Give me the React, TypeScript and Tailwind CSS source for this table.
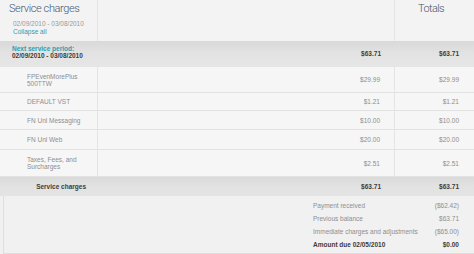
import React from "react";

const rows: { label: string[]; amt: string; h: string }[] = [
  { label: ["FPEvenMorePlus", "500TTW"], amt: "$29.99", h: "h-[26px]" },
  { label: ["DEFAULT VST"], amt: "$1.21", h: "h-[18px]" },
  { label: ["FN Unl Messaging"], amt: "$10.00", h: "h-[19px]" },
  { label: ["FN Unl Web"], amt: "$20.00", h: "h-[20px]" },
  { label: ["Taxes, Fees, and", "Surcharges"], amt: "$2.51", h: "h-[27px]" },
];

const summary = [
  { l: "Payment received", v: "($62.42)", b: false },
  { l: "Previous balance", v: "$63.71", b: false },
  { l: "Immediate charges and adjustments", v: "($65.00)", b: false },
  { l: "Amount due 02/05/2010", v: "$0.00", b: true },
];

export default function App() {
  return (
    <div
      className="w-[474px] h-[254px] bg-[#f1f1f1] overflow-hidden text-[6.5px] leading-[7px] text-[#8e8e8e]"
      style={{ fontFamily: '"Liberation Sans", Arial, sans-serif' }}
    >
      {/* header */}
      <div className="grid grid-cols-[98px_297px_79px] h-[41px] bg-[#f3f3f3]">
        <div className="border-r border-[#e4e4e4] pt-[3px]">
          <div
            className="pl-[9px] text-[11px] leading-[12px] font-light tracking-[-0.4px] text-[#46566e] whitespace-nowrap"
            style={{ fontFamily: 'Roboto, "Liberation Sans", sans-serif' }}
          >
            Service charges
          </div>
          <div className="pl-[13px] mt-[5px] leading-[7.5px] text-[#9a9a9a] whitespace-nowrap">
            02/09/2010 - 03/08/2010
          </div>
          <div className="pl-[13px] leading-[7.5px] text-[#2b9db0]">Collapse all</div>
        </div>
        <div className="border-r border-[#e4e4e4]" />
        <div className="pt-[3px] pl-[23px]">
          <div
            className="text-[11px] leading-[12px] font-light tracking-[-0.6px] text-[#46566e]"
            style={{ fontFamily: 'Roboto, "Liberation Sans", sans-serif' }}
          >
            Totals
          </div>
        </div>
      </div>

      {/* next service period band */}
      <div className="grid grid-cols-[98px_297px_79px] h-[26px] bg-gradient-to-b from-[#d9d9d9] via-[#e3e3e3] to-[#e6e6e6] items-center font-bold">
        <div className="pl-[12px] leading-[6.5px] whitespace-nowrap mb-[3px]">
          <div className="text-[#2b9db0]">Next service period:</div>
          <div className="text-[#3c3c3c]">02/09/2010 - 03/08/2010</div>
        </div>
        <div className="text-right pr-[14px] text-[#3c3c3c] mb-[2px]">$63.71</div>
        <div className="text-right pr-[15px] text-[#3c3c3c] mb-[2px]">$63.71</div>
      </div>

      {/* rows */}
      {rows.map((r, i) => (
        <div
          key={i}
          className={`grid grid-cols-[98px_297px_79px] ${r.h} bg-[#f6f6f6] border-b border-[#e2e2e2]`}
        >
          <div className="border-r border-[#e4e4e4] pl-[27px] flex flex-col justify-center">
            {r.label.map((t, j) => (
              <div key={j} className="whitespace-nowrap">
                {t}
              </div>
            ))}
          </div>
          <div className="border-r border-[#e4e4e4] flex items-center justify-end pr-[14px]">
            {r.amt}
          </div>
          <div className="flex items-center justify-end pr-[15px]">{r.amt}</div>
        </div>
      ))}

      {/* service charges band */}
      <div className="grid grid-cols-[98px_297px_79px] h-[19px] bg-gradient-to-b from-[#dadada] via-[#e2e2e2] to-[#e4e4e4] items-center font-bold text-[#3c3c3c]">
        <div className="text-right pr-[12px]">Service charges</div>
        <div className="text-right pr-[14px]">$63.71</div>
        <div className="text-right pr-[15px]">$63.71</div>
      </div>

      {/* summary */}
      <div className="ml-[3px] h-[58px] border-l border-b border-[#dedede] pt-[3px]">
        <div className="ml-[309px] w-[146px] flex flex-col">
          {summary.map((s, i) => (
            <div
              key={i}
              className={`flex justify-between h-[13px] items-center ${
                s.b ? "font-bold text-[#3c3c3c]" : ""
              }`}
            >
              <span className="whitespace-nowrap">{s.l}</span>
              <span>{s.v}</span>
            </div>
          ))}
        </div>
      </div>
    </div>
  );
}
